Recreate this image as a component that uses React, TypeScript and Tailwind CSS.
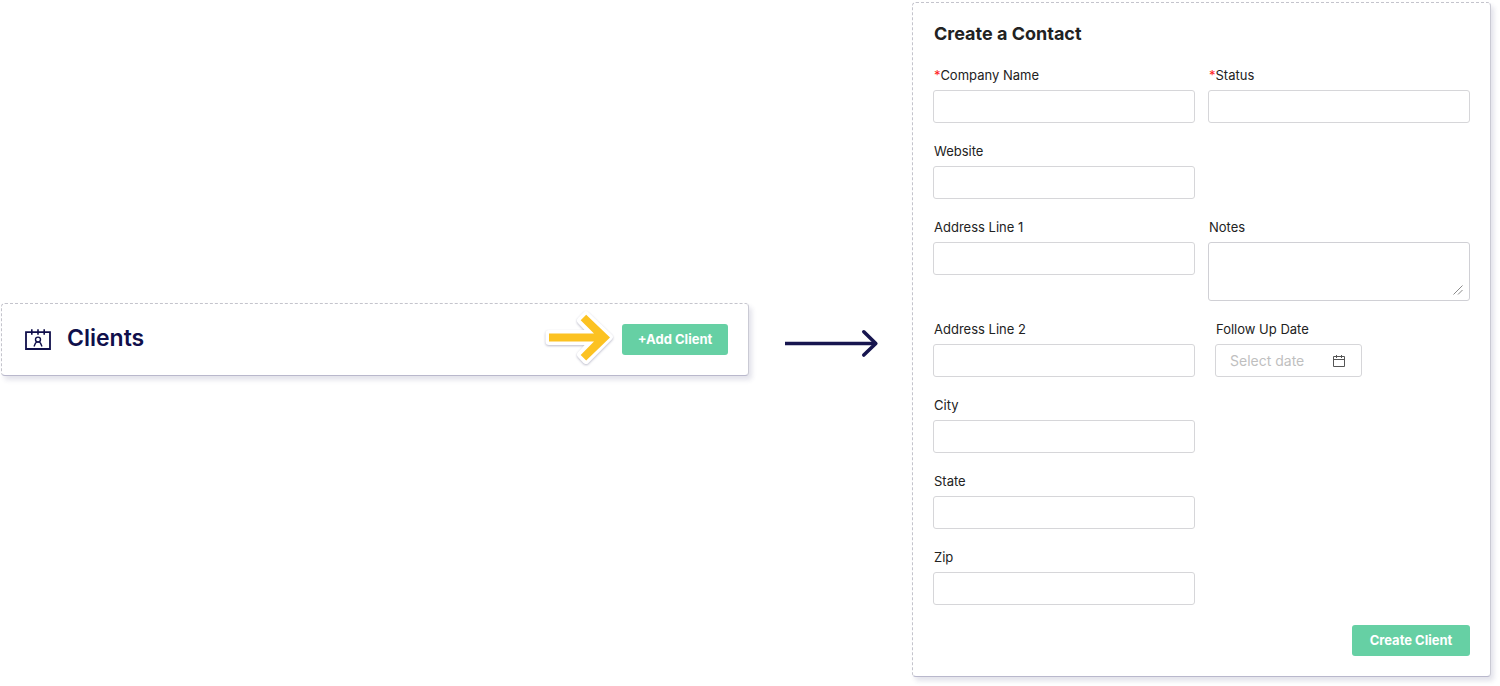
import React from 'react';

interface FieldProps {
  id: string;
  label: string;
  required?: boolean;
  className?: string;
  children?: React.ReactNode;
}

const inputClass =
  'block h-[33px] w-full rounded-[3px] border border-[#d6d6d9] bg-white px-3 text-sm text-[#222] outline-none focus:border-[#66d0a4]';

const Field: React.FC<FieldProps> = ({
  id,
  label,
  required,
  className = 'col-start-1',
  children,
}) => (
  <div className={className}>
    <label
      htmlFor={id}
      className="mb-[5px] block pl-px text-[13px] leading-5 text-[#222]"
    >
      {required && <span className="text-[#ff2020]">*</span>}
      {label}
    </label>
    {children ?? (
      <input id={id} type="text" required={required} className={inputClass} />
    )}
  </div>
);

const ClientsIcon = () => (
  <svg
    width="28"
    height="24"
    viewBox="0 0 28 24"
    fill="none"
    stroke="#100f4b"
    strokeWidth="1.8"
    aria-hidden="true"
  >
    <path d="M2 4.2h24v16.8H2z" />
    <path d="M7.8 1.3v5.4M14 1.3v5.4M20.2 1.3v5.4" strokeWidth="1.6" />
    <circle cx="14" cy="11.6" r="2.5" strokeWidth="1.4" />
    <path
      d="M10 18.5l1.5-3.4c.5-.9 1.3-1.2 2.5-1.2s2 .3 2.5 1.2l1.5 3.4"
      strokeWidth="1.4"
    />
  </svg>
);

const YellowArrow = () => (
  <svg
    width="74"
    height="58"
    viewBox="0 1 74 58"
    fill="none"
    className="drop-shadow-[0_1px_1px_rgba(30,30,80,0.3)]"
    aria-hidden="true"
  >
    <path
      d="M5 23.4H48.5L36.5 10.5L42 4.8L65.3 27L42 50.5L36.5 44.6L48.5 31.6H5z"
      fill="#fff"
      stroke="#fff"
      strokeWidth="7"
      strokeLinejoin="round"
    />
    <path
      d="M5 23.4H50L36.7 10.2L42.2 4.8L66 27.5L42.2 50.4L36.7 44.9L50 31.6H5z"
      fill="#fcc221"
    />
  </svg>
);

const FlowArrow = () => (
  <svg
    width="96"
    height="40"
    viewBox="0 0 96 40"
    fill="none"
    stroke="#17164f"
    strokeWidth="3.6"
    aria-hidden="true"
  >
    <path d="M2 23.5h90" />
    <path
      d="M80.8 11.8L92.8 23.5L80.8 35"
      strokeLinecap="round"
      strokeLinejoin="round"
    />
  </svg>
);

const CalendarIcon = () => (
  <svg
    width="12"
    height="12"
    viewBox="0 0 12 12"
    fill="none"
    stroke="#555"
    aria-hidden="true"
  >
    <path d="M.5 1.5h11v10H.5zM.5 4.5h11M3.5 0v3M8.5 0v3" />
  </svg>
);

const ResizeGrip = () => (
  <svg
    width="10"
    height="10"
    viewBox="0 0 10 10"
    stroke="#8a8a8a"
    className="pointer-events-none absolute right-[7px] bottom-[6px]"
    aria-hidden="true"
  >
    <path d="M.5 9.5l9-9M5 9.5l4.5-4.5" />
  </svg>
);

const cardClass =
  'rounded-[4px] border border-t-[#c4c4cc] border-r-[#cacad4] border-b-[#b9b8cc] border-l-[#c4c4cc] bg-white shadow-[3px_4px_5px_rgba(60,60,110,0.14)] [border-left-style:dashed] [border-top-style:dashed]';

const buttonClass =
  'h-[31px] rounded-[3px] bg-[#66d0a4] text-[13px] font-bold text-white';

const App: React.FC = () => (
  <main className="grid grid-cols-[748fr_163px_579fr] items-center bg-white pt-[2px] pr-[9px] pb-[9px] pl-px font-['Inter',sans-serif]">
    <section className={`flex h-[73px] items-center pr-5 pl-[22px] ${cardClass}`}>
      <ClientsIcon />
      <h1 className="ml-[15px] pb-[3px] text-[23px] leading-7 font-semibold text-[#100f4b]">
        Clients
      </h1>
      <div className="ml-auto flex items-center gap-1">
        <YellowArrow />
        <button type="button" className={`w-[106px] ${buttonClass}`}>
          +Add Client
        </button>
      </div>
    </section>

    <div className="flex justify-center">
      <FlowArrow />
    </div>

    <form
      className={`px-5 pt-[19px] pb-5 ${cardClass}`}
      onSubmit={(e) => e.preventDefault()}
    >
      <h2 className="mb-[19px] pl-px text-lg leading-6 font-bold text-[#222]">
        Create a Contact
      </h2>
      <div className="grid grid-cols-2 gap-x-[13px] gap-y-[18px]">
        <Field id="company" label="Company Name" required />
        <Field id="status" label="Status" required className="col-start-2" />
        <Field id="website" label="Website" />
        <Field id="address1" label="Address Line 1" />
        <Field id="notes" label="Notes" className="col-start-2">
          <div className="relative">
            <textarea
              id="notes"
              className="block h-[59px] w-full resize-none rounded-[3px] border border-[#d0d0d5] px-3 py-1 text-sm text-[#222] outline-none"
            />
            <ResizeGrip />
          </div>
        </Field>
        <Field id="address2" label="Address Line 2" />
        <Field
          id="followUp"
          label="Follow Up Date"
          className="col-start-2 ml-[7px]"
        >
          <div className="flex h-[33px] w-[147px] items-center rounded-[3px] border border-[#d6d6d9] pr-4 pl-[14px]">
            <input
              id="followUp"
              type="text"
              placeholder="Select date"
              className="min-w-0 flex-1 text-sm text-[#222] outline-none placeholder:text-[#bfbfbf]"
            />
            <CalendarIcon />
          </div>
        </Field>
        <Field id="city" label="City" />
        <Field id="state" label="State" />
        <Field id="zip" label="Zip" />
      </div>
      <div className="mt-5 flex justify-end">
        <button type="submit" className={`w-[118px] ${buttonClass}`}>
          Create Client
        </button>
      </div>
    </form>
  </main>
);

export default App;
